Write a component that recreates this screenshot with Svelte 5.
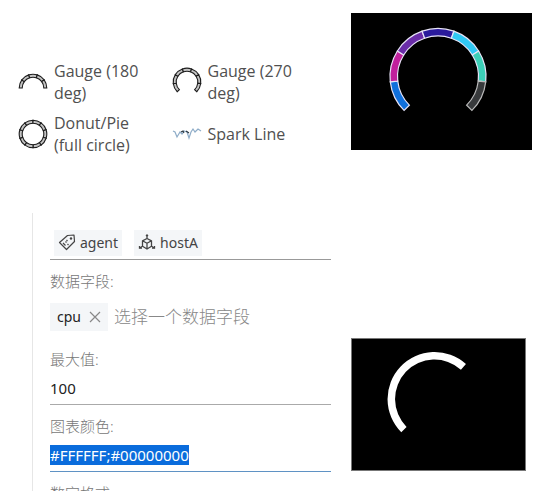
<script lang="ts">
  import { onMount } from 'svelte';

  let maxValue = $state('100');
  let chartColors = $state('#FFFFFF;#00000000');
  let fields = $state(['cpu']);
  let colorInput: HTMLInputElement;

  const palette = ['#1070dc', '#c0209c', '#6a2ca8', '#2a1a9c', '#30c8f4', '#3cd0b8', '#383a3c'];

  // Ring segment, angles in degrees counter-clockwise from the x axis
  function ring(cx: number, cy: number, outer: number, inner: number, from: number, to: number) {
    const p = (r: number, a: number) =>
      `${(cx + r * Math.cos((a * Math.PI) / 180)).toFixed(2)} ${(cy - r * Math.sin((a * Math.PI) / 180)).toFixed(2)}`;
    const large = from - to > 180 ? 1 : 0;
    return `M${p(outer, from)}A${outer} ${outer} 0 ${large} 1 ${p(outer, to)}L${p(inner, to)}A${inner} ${inner} 0 ${large} 0 ${p(inner, from)}Z`;
  }

  function split(start: number, sweep: number, count: number) {
    return Array.from({ length: count }, (_, i) => [start - (sweep * i) / count, start - (sweep * (i + 1)) / count]);
  }

  const options = [
    { label: 'Gauge (180 deg)', start: 180, sweep: 180, count: 5 },
    { label: 'Gauge (270 deg)', start: 225, sweep: 270, count: 7 },
    { label: 'Donut/Pie (full circle)', start: 234, sweep: 360, count: 10 },
    { label: 'Spark Line', start: 0, sweep: 0, count: 0 },
  ];

  onMount(() => {
    colorInput.focus({ preventScroll: true });
    colorInput.select();
  });
</script>

<main>
  <div class="left">
    <ul class="options">
      {#each options as o}
        <li>
          {#if o.count}
            <svg class="type" viewBox="0 0 30 {o.sweep === 180 ? 18 : 30}" width="30" height={o.sweep === 180 ? 18 : 30} aria-hidden="true">
              {#each split(o.start, o.sweep, o.count) as [a, b]}
                <path d={ring(15, 15, 13.8, 10.8, a, b)} fill="#c4c4c4" stroke="#1c1c1c" stroke-width="1.1" />
              {/each}
            </svg>
          {:else}
            <svg class="type" viewBox="0 0 30 14" width="30" height="14" aria-hidden="true">
              <path d="M1 4l2 1 2 5 3-5 2 2 2-3 3 1 2 6 2-6 2-3 2 3 3-3 3 2" fill="none" stroke="#8eacc8" stroke-width="1.2" />
              <path d="M9 5l2-1 1 2M14 4l3 2" fill="none" stroke="#29343d" stroke-width="1.1" />
            </svg>
          {/if}
          <span>{o.label}</span>
        </li>
      {/each}
    </ul>

    <form class="panel" onsubmit={(e) => e.preventDefault()}>
      <div class="sources">
        <span class="source">
          <svg viewBox="0 0 18 18" width="18" height="18" fill="none" stroke="#444" stroke-width="1.2" aria-hidden="true">
            <path d="M1.5 8.500L9.500 1.500l6.500-.5.500 6.500L8.500 15.500z" stroke-linejoin="round" />
            <circle cx="13" cy="4.500" r="1.200" fill="#444" stroke="none" />
            <path d="M5 9l2.500 2.500M7.500 7.500L8.500 8.500M9.500 10l1 1M8.500 6l1 1" />
          </svg>
          agent
        </span>
        <span class="source">
          <svg viewBox="0 0 18 18" width="18" height="18" fill="none" stroke="#444" stroke-width="1.3" aria-hidden="true">
            <path d="M9 4.500l4.500 2.300v5.400L9 15l-4.500-2.800V6.800zM4.500 6.800L9 9.300l4.500-2.500M9 9.300V15M9 1v3.500M4.500 12.200L1.500 14M13.500 12.200L16.500 14" stroke-linejoin="round" />
            <path d="M1.500 12v2H4M16.500 12v2H14M8 2l1-1 1 1" />
          </svg>
          hostA
        </span>
      </div>

      <label for="field">数据字段:</label>
      <div class="picker">
        {#each fields as f}
          <span class="chip">
            {f}
            <button type="button" aria-label="移除 {f}" onclick={() => (fields = fields.filter((x) => x !== f))}>
              <svg viewBox="0 0 12 12" width="12" height="12" aria-hidden="true">
                <path d="M1 1l10 10M11 1L1 11" stroke="#888" stroke-width="1.2" />
              </svg>
            </button>
          </span>
        {/each}
        <input id="field" type="text" placeholder="选择一个数据字段" />
      </div>

      <label for="max">最大值:</label>
      <input id="max" class="line" type="text" bind:value={maxValue} />

      <label for="colors">图表颜色:</label>
      <input id="colors" class="line" type="text" bind:value={chartColors} bind:this={colorInput} />

      <span class="next">数字格式</span>
    </form>
  </div>

  <div class="right">
    <svg viewBox="0 0 181 137" width="181" height="137" role="img" aria-label="Gauge (270 deg)">
      <rect width="181" height="137" fill="#000" />
      {#each split(225, 270, 7) as [a, b], i}
        <path d={ring(87, 63.5, 48, 40.5, a, b)} fill={palette[i]} stroke={i === 6 ? '#bbb' : '#e8e4f8'} stroke-width="1.2" />
      {/each}
    </svg>
    <svg viewBox="0 0 175 133" width="175" height="133" role="img" aria-label="Gauge (270 deg)">
      <rect x=".5" y=".5" width="174" height="132" fill="#000" stroke="#777" />
      <path d={ring(83.5, 61, 47, 39.5, 225, 48)} fill="#fff" />
    </svg>
  </div>
</main>

<style>
  :global(body) {
    background: #fff;
  }

  main {
    display: flex;
    justify-content: space-between;
    padding: 13px 10px 0 18px;
    font-family: 'Open Sans', 'Noto Sans CJK SC', sans-serif;
    color: #505050;
  }

  .left {
    flex: 1;
    max-width: 313px;
    min-width: 0;
  }

  .options {
    display: grid;
    grid-template-columns: 1fr 1fr;
    row-gap: 8px;
    list-style: none;
    margin: 0;
    padding: 47px 6px 0 0;
    font-size: 16px;
    line-height: 22px;
  }

  .options li {
    display: flex;
    align-items: center;
    gap: 6px;
  }

  .options span {
    max-width: 92px;
  }

  .type {
    flex: none;
  }

  .panel {
    display: flex;
    flex-direction: column;
    height: 278px;
    overflow: hidden;
    box-sizing: border-box;
    margin: 57px 0 0 14px;
    padding: 17px 0 0 17px;
    border-left: 1px solid #e6e6e6;
    font-family: 'Noto Sans', 'Noto Sans CJK SC', sans-serif;
    font-size: 14px;
    line-height: 20px;
  }

  .panel > * {
    flex: none;
  }

  .sources {
    display: flex;
    gap: 12px;
    padding: 0 4px 3px;
    border-bottom: 1px solid #999;
  }

  .source {
    display: flex;
    align-items: center;
    gap: 4px;
    height: 26px;
    padding: 0 4px;
    background: #f4f6f8;
    color: #444;
  }

  label,
  .next {
    font-size: 15px;
    font-weight: 300;
    color: #777;
    margin-top: 11px;
  }

  .picker {
    display: flex;
    gap: 6px;
    margin: 12px 0 7px;
  }

  .chip {
    display: flex;
    align-items: center;
    gap: 8px;
    height: 28px;
    padding: 0 7px;
    background: #f4f6f8;
    color: #222;
  }

  .chip button {
    display: flex;
    padding: 0;
    border: 0;
    background: none;
  }

  input {
    min-width: 0;
    padding: 0;
    border: 0;
    outline: 0;
    background: none;
    font: inherit;
    color: #222;
  }

  .picker input {
    flex: 1;
    font-size: 17px;
  }

  input::placeholder {
    color: #888;
    font-weight: 300;
    opacity: 1;
  }

  .line {
    height: 33px;
    padding-top: 2px;
    border-bottom: 1px solid #aaa;
    font-size: 15px;
  }

  .line:focus {
    border-color: #5f92c4;
  }

  .line::selection {
    background: #0a6cdc;
    color: #fff;
  }

  .right {
    display: flex;
    flex-direction: column;
    gap: 188px;
  }

  .right svg {
    display: block;
  }
</style>
